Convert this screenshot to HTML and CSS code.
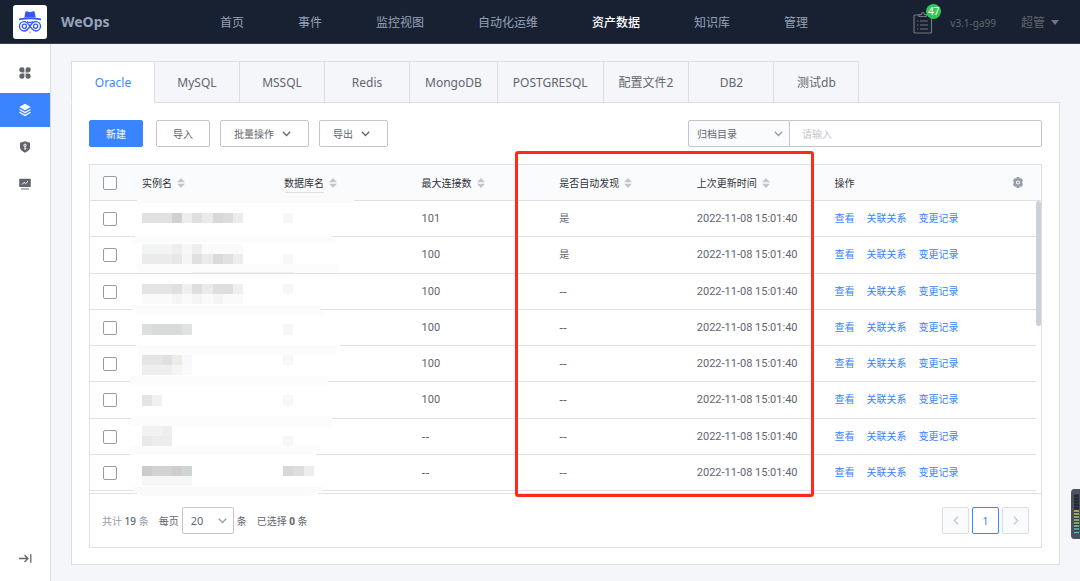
FILE: index.html
```html
<!DOCTYPE html>
<html lang="zh-CN">
<head>
<meta charset="utf-8">
<title>WeOps</title>
<link rel="stylesheet" href="styles.css">
</head>
<body>
<header class="topbar">
  <a class="brand" href="#">
    <span class="logo">
      <svg width="24" height="24" viewBox="0 0 24 24" fill="none">
        <path d="M6.4 7.2 7.3 2.2Q7.6 1 8.8 1.2L12 2.3 15.2 1.2Q16.4 1 16.7 2.2L17.6 7.2Z" fill="#3355f5"/>
        <path d="M6.2 7.6H17.8" stroke="#8fa2fa" stroke-width="1"/>
        <path d="M1 9.4Q12 7.4 23 9.4" stroke="#3355f5" stroke-width="1.6"/>
        <path d="M12 16.200C10 13.500 8.700 11.600 6.200 11.600A4.700 4.700 0 1 0 6.200 21C9.500 21 10.500 18.500 12 16.200C13.500 13.900 14.500 11.600 17.800 11.600A4.700 4.700 0 1 1 17.800 21C15.300 21 14 18.900 12 16.200" stroke="#3355f5" stroke-width="1.400"/>
        <circle cx="6.400" cy="16.300" r="2.100" stroke="#3355f5" stroke-width="1.300"/>
        <circle cx="17.600" cy="16.300" r="2.100" stroke="#3355f5" stroke-width="1.300"/>
        <path d="M9 11.500Q12 13.500 15 11.500" stroke="#3355f5" stroke-width="1.300"/>
        <circle cx="12" cy="22.300" r="1" fill="#f5b04c"/>
      </svg>
    </span>
    <span class="brand-name">WeOps</span>
  </a>
  <nav class="main-nav">
    <a href="#">首页</a>
    <a href="#">事件</a>
    <a href="#">监控视图</a>
    <a href="#">自动化运维</a>
    <a href="#" class="current">资产数据</a>
    <a href="#">知识库</a>
    <a href="#">管理</a>
  </nav>
  <div class="account">
    <button class="tasks" type="button" aria-label="待办">
      <svg width="20" height="22" viewBox="0 0 20 22" fill="none" stroke="#70757f" stroke-width="1.200">
        <path d="M6 3H2Q1 3 1 4V20Q1 21 2 21H17.500Q18.500 21 18.500 20V4Q18.500 3 17.500 3H13.500"/>
        <path d="M6 4.500V2.600H8.200Q8.500 .7 9.800 .7T11.400 2.600H13.500V4.500Z"/>
        <path d="M7 9H15M7 13H15M7 17H15M4 9H5.300M4 13H5.300M4 17H5.300"/>
      </svg>
      <span class="badge">47</span>
    </button>
    <span class="version">v3.1-ga99</span>
    <button class="user" type="button">超管
      <svg width="8" height="5" viewBox="0 0 8 5"><path d="M0 0H8L4 5Z" fill="#70757f"/></svg>
    </button>
  </div>
</header>

<div class="shell">
  <aside class="sidebar">
    <nav class="side-nav">
      <a href="#" aria-label="概览">
        <svg width="12" height="12" viewBox="0 0 12 12" fill="#63656e"><path d="M2.700 .3A2.500 2.500 0 0 1 5.400 3V5.400H3A2.550 2.550 0 1 1 2.700 .3ZM9.300 .3A2.500 2.500 0 0 0 6.600 3V5.400H9A2.550 2.550 0 1 0 9.300 .3ZM2.700 11.700A2.500 2.500 0 0 0 5.400 9V6.600H3A2.550 2.550 0 1 0 2.700 11.700ZM9.300 11.700A2.500 2.500 0 0 1 6.600 9V6.600H9A2.550 2.550 0 1 1 9.300 11.700Z"/></svg>
      </a>
      <a href="#" class="active" aria-label="资产">
        <svg width="12" height="14" viewBox="0 0 12 14" fill="#fff"><path d="M6 .8 11.700 4 6 7.300 .3 4Z"/><path d="M.5 6.500 6 9.600 11.500 6.500M.5 9.300 6 12.400 11.500 9.300" fill="none" stroke="#fff" stroke-width="1.300"/></svg>
      </a>
      <a href="#" aria-label="安全">
        <svg width="12" height="12" viewBox="0 0 12 12"><path d="M6 .3 11 1.800V6.500Q11 9.500 6 11.800Q1 9.500 1 6.500V1.800Z" fill="#63656e"/><circle cx="6" cy="4.300" r="1.200" fill="none" stroke="#fff"/><path d="M6 5.500V9M6 7.500H7.300" stroke="#fff"/></svg>
      </a>
      <a href="#" aria-label="监控">
        <svg width="12" height="12" viewBox="0 0 12 12"><path d="M1 .8H11Q11.800 .8 11.800 1.600V8.200Q11.800 9 11 9H1Q.2 9 .2 8.200V1.600Q.2 .8 1 .8Z" fill="#63656e"/><path d="M3 6.500 5 4.300 6.600 5.700 9 3.300" fill="none" stroke="#fff"/><path d="M2 11H10" stroke="#8b8d95" stroke-width="1.300"/></svg>
      </a>
    </nav>
    <button class="collapse" type="button" aria-label="展开">
      <svg width="13" height="9" viewBox="0 0 13 9" fill="none" stroke="#63656e" stroke-width="1.300"><path d="M0 4.500H8.700M5.500 1 9 4.500 5.500 8M11.800 .3V8.700"/></svg>
    </button>
  </aside>

  <main class="content">
    <div class="tabs">
      <button class="tab selected" type="button">Oracle</button>
      <button class="tab" type="button">MySQL</button>
      <button class="tab" type="button">MSSQL</button>
      <button class="tab" type="button">Redis</button>
      <button class="tab" type="button">MongoDB</button>
      <button class="tab" type="button">POSTGRESQL</button>
      <button class="tab" type="button">配置文件2</button>
      <button class="tab" type="button">DB2</button>
      <button class="tab" type="button">测试db</button>
    </div>
    <section class="card">
      <div class="toolbar">
        <button class="btn primary" type="button">新建</button>
        <button class="btn import" type="button">导入</button>
        <button class="btn" type="button">批量操作
          <svg class="chev" width="9" height="6" viewBox="0 0 9 6"><path d="M.8 .8 4.500 4.500 8.200 .8"/></svg>
        </button>
        <button class="btn" type="button">导出
          <svg class="chev" width="9" height="6" viewBox="0 0 9 6"><path d="M.8 .8 4.500 4.500 8.200 .8"/></svg>
        </button>
        <div class="search">
          <span class="pick field">
            <select aria-label="搜索字段"><option>归档目录</option></select>
            <svg class="chev" width="9" height="6" viewBox="0 0 9 6"><path d="M.8 .8 4.500 4.500 8.200 .8"/></svg>
          </span>
          <input type="text" placeholder="请输入" aria-label="搜索内容">
        </div>
      </div>

      <div class="grid">
        <div class="rows">
          <table>
            <colgroup><col class="c-check"><col class="c-name"><col class="c-mid"><col class="c-mid"><col class="c-mid"><col class="c-mid"><col></colgroup>
            <thead>
              <tr>
                <th><input type="checkbox" aria-label="全选"></th>
                <th>实例名<svg class="sort" viewBox="0 0 8 10"><path d="M4 0 8 4.300H0ZM4 10 0 5.700H8Z"/></svg></th>
                <th>数据库名<svg class="sort" viewBox="0 0 8 10"><path d="M4 0 8 4.300H0ZM4 10 0 5.700H8Z"/></svg></th>
                <th>最大连接数<svg class="sort" viewBox="0 0 8 10"><path d="M4 0 8 4.300H0ZM4 10 0 5.700H8Z"/></svg></th>
                <th>是否自动发现<svg class="sort" viewBox="0 0 8 10"><path d="M4 0 8 4.300H0ZM4 10 0 5.700H8Z"/></svg></th>
                <th>上次更新时间<svg class="sort" viewBox="0 0 8 10"><path d="M4 0 8 4.300H0ZM4 10 0 5.700H8Z"/></svg></th>
                <th><div class="ops-head">操作
                  <button class="gear" type="button" aria-label="列设置"><svg width="10" height="11" viewBox="0 0 10 11"><path fill="#979ba5" fill-rule="evenodd" d="M3.800 0H6.200L6.700 1.600 8.500 1.300 10 3.500 9 5.500 10 7.500 8.500 9.700 6.700 9.400 6.200 11H3.800L3.300 9.400 1.500 9.700 0 7.500 1 5.500 0 3.500 1.500 1.300 3.300 1.600ZM5 3.500A2 2 0 1 0 5 7.500A2 2 0 1 0 5 3.500Z"/><circle cx="5" cy="5.500" r="1.100" fill="#979ba5"/></svg></button>
                </div></th>
              </tr>
            </thead>
            <tbody>
              <tr><td><input type="checkbox" aria-label="选择第1行"></td><td></td><td></td><td>101</td><td class="cjk">是</td><td>2022-11-08 15:01:40</td><td><div class="ops"><a href="#">查看</a><a href="#">关联关系</a><a href="#">变更记录</a></div></td></tr>
              <tr><td><input type="checkbox" aria-label="选择第2行"></td><td></td><td></td><td>100</td><td class="cjk">是</td><td>2022-11-08 15:01:40</td><td><div class="ops"><a href="#">查看</a><a href="#">关联关系</a><a href="#">变更记录</a></div></td></tr>
              <tr><td><input type="checkbox" aria-label="选择第3行"></td><td></td><td></td><td>100</td><td class="none">--</td><td>2022-11-08 15:01:40</td><td><div class="ops"><a href="#">查看</a><a href="#">关联关系</a><a href="#">变更记录</a></div></td></tr>
              <tr><td><input type="checkbox" aria-label="选择第4行"></td><td></td><td></td><td>100</td><td class="none">--</td><td>2022-11-08 15:01:40</td><td><div class="ops"><a href="#">查看</a><a href="#">关联关系</a><a href="#">变更记录</a></div></td></tr>
              <tr><td><input type="checkbox" aria-label="选择第5行"></td><td></td><td></td><td>100</td><td class="none">--</td><td>2022-11-08 15:01:40</td><td><div class="ops"><a href="#">查看</a><a href="#">关联关系</a><a href="#">变更记录</a></div></td></tr>
              <tr><td><input type="checkbox" aria-label="选择第6行"></td><td></td><td></td><td>100</td><td class="none">--</td><td>2022-11-08 15:01:40</td><td><div class="ops"><a href="#">查看</a><a href="#">关联关系</a><a href="#">变更记录</a></div></td></tr>
              <tr><td><input type="checkbox" aria-label="选择第7行"></td><td></td><td></td><td class="none">--</td><td class="none">--</td><td>2022-11-08 15:01:40</td><td><div class="ops"><a href="#">查看</a><a href="#">关联关系</a><a href="#">变更记录</a></div></td></tr>
              <tr><td><input type="checkbox" aria-label="选择第8行"></td><td></td><td></td><td class="none">--</td><td class="none">--</td><td>2022-11-08 15:01:40</td><td><div class="ops"><a href="#">查看</a><a href="#">关联关系</a><a href="#">变更记录</a></div></td></tr>
            </tbody>
          </table>
          <span class="thumb"></span>
        </div>

        <!-- Mosaic hiding the instance and database names -->
        <svg class="mosaic" width="270" height="334" viewBox="89 164 270 334" shape-rendering="crispEdges" aria-hidden="true">
          <path fill="#fafbfd" d="M137 200 285 194H326L354 200V203H137Z"/>
          <path fill="#dcdee3" d="M285 192H324V193H285Z"/>
          <g fill="#fcfcfc">
            <path d="M137 234H330L338 243H131Z"/>
            <path d="M134 264H340L337 273H140Z"/>
            <path d="M130 305H324L319 310 326 314H135Z"/>
            <path d="M136 345H340L337 355H139Z"/>
            <path d="M130 376H329L327 385H130Z"/>
            <path d="M132 416H333L331 426H130Z"/>
            <path d="M130 446H322L316 455H130Z"/>
          </g>
          <path fill="#f9fafa" d="M132 487H324Q322 495 308 496H145Q134 495 132 487Z"/>
          <path fill="#f0f0f2" d="M192 272H294V273H192Z"/>
          <!-- row 1 -->
          <path fill="#e0e1e1" d="M142 213h20v10h-20z"/><path fill="#e1e1df" d="M162 213h10v10h-10z"/><path fill="#d1d1d1" d="M172 213h10v10h-10z"/><path fill="#eceeee" d="M182 213h10v10h-10z"/><path fill="#dedfdf" d="M192 213h10v10h-10z"/><path fill="#ebeae8" d="M202 213h11v10h-11z"/><path fill="#d8d8d8" d="M213 213h10v10h-10z"/><path fill="#dcdcdc" d="M223 213h10v10h-10z"/><path fill="#ebecee" d="M233 213h10v10h-10z"/>
          <!-- row 2 -->
          <path fill="#f3f4f4" d="M142 244h30v10h-30z"/><path fill="#eeeeee" d="M172 244h10v10h-10z"/><path fill="#f6f8f8" d="M182 244h10v10h-10z"/><path fill="#eeeeee" d="M192 244h10v10h-10z"/><path fill="#fafafa" d="M202 244h41v10h-41z"/>
          <path fill="#ebebeb" d="M142 254h30v10h-30z"/><path fill="#e7e7e7" d="M172 254h10v10h-10z"/><path fill="#f4f5f5" d="M182 254h10v10h-10z"/><path fill="#e0e0e0" d="M192 254h10v10h-10z"/><path fill="#ecebe9" d="M202 254h11v10h-11z"/><path fill="#dadada" d="M213 254h10v10h-10z"/><path fill="#e1e1e1" d="M223 254h10v10h-10z"/><path fill="#ecedf0" d="M233 254h10v10h-10z"/>
          <!-- row 3 -->
          <path fill="#e4e4e4" d="M142 284h30v10h-30z"/><path fill="#dfdfdf" d="M172 284h10v10h-10z"/><path fill="#efefef" d="M182 284h10v10h-10z"/><path fill="#dedede" d="M192 284h10v10h-10z"/><path fill="#ecebea" d="M202 284h11v10h-11z"/><path fill="#dedede" d="M213 284h20v10h-20z"/><path fill="#eeeff2" d="M233 284h10v10h-10z"/><path fill="#fafafa" d="M142 294h101v10h-101z"/><path fill="#f5f5f5" d="M172 294h10v10h-10zM192 294h10v10h-10zM213 294h10v10h-10z"/>
          <!-- row 4 -->
          <path fill="#dddede" d="M142 324h10v11h-10z"/><path fill="#d9dbda" d="M152 324h30v11h-30z"/><path fill="#e1e3e2" d="M182 324h10v11h-10z"/>
          <!-- row 5 -->
          <path fill="#e5e5e5" d="M142 355h20v10h-20z"/><path fill="#dfe1e0" d="M162 355h10v10h-10z"/><path fill="#ebebe8" d="M172 355h10v10h-10z"/><path fill="#f6f8fa" d="M182 355h10v10h-10z"/><path fill="#eeeeee" d="M142 365h30v10h-30z"/><path fill="#f4f4f4" d="M172 365h10v10h-10z"/><path fill="#fafafa" d="M182 365h10v10h-10z"/>
          <!-- row 6 -->
          <path fill="#e4e4e3" d="M142 395h10v11h-10z"/><path fill="#f1f1f1" d="M152 395h10v11h-10z"/>
          <!-- row 7 -->
          <path fill="#f2f2f2" d="M142 426h20v10h-20z"/><path fill="#eeeeee" d="M162 426h10v10h-10z"/><path fill="#e8e8e8" d="M142 436h10v10h-10z"/><path fill="#ebeceb" d="M152 436h20v10h-20z"/>
          <!-- row 8 -->
          <path fill="#cdccca" d="M142 466h10v10h-10z"/><path fill="#d2d3d5" d="M152 466h20v10h-20z"/><path fill="#cfcecd" d="M172 466h10v10h-10z"/><path fill="#d0d4d4" d="M182 466h10v10h-10z"/><path fill="#f6f6f6" d="M142 476h50v10h-50z"/>
          <path fill="#d9d8d7" d="M283 466h10v10h-10z"/><path fill="#dcdddf" d="M293 466h11v10h-11z"/><path fill="#ededef" d="M304 466h10v10h-10z"/>
          <path fill="#f7f7f7" d="M283 213h10v10h-10zM283 254h10v10h-10zM283 284h10v10h-10zM283 324h10v11h-10zM283 355h10v10h-10zM283 395h10v11h-10zM283 436h10v10h-10z"/>
        </svg>

        <footer class="pager-bar">
          <span class="muted">共计 <b>19</b> 条</span>
          <label class="per-page">每页
            <span class="pick size">
              <select><option>20</option></select>
              <svg class="chev" width="9" height="6" viewBox="0 0 9 6"><path d="M.8 .8 4.500 4.500 8.200 .8"/></svg>
            </span>
            条</label>
          <span>已选择 <strong>0</strong> 条</span>
          <nav class="pager">
            <button type="button" aria-label="上一页"><svg width="6" height="9" viewBox="0 0 6 9"><path d="M5 .8 1.300 4.500 5 8.200"/></svg></button>
            <button type="button" class="on">1</button>
            <button type="button" aria-label="下一页"><svg width="6" height="9" viewBox="0 0 6 9"><path d="M1 .8 4.700 4.500 1 8.200"/></svg></button>
          </nav>
        </footer>
        <span class="highlight"></span>
      </div>
    </section>
  </main>
</div>

<div class="meter" aria-hidden="true">
  <svg width="9" height="50" viewBox="0 0 9 50"><path d="M9 0H3Q0 0 0 4V46Q0 50 3 50H9Z" fill="#4c5160"/><path d="M3 5H8V45H3Z" fill="#343946"/><g stroke-width="1.500"><path d="M3 7H8M3 10H8M3 13H8M3 16H8M3 19H8" stroke="#22262f"/><path d="M3 22H8M3 25H8" stroke="#d3c94a"/><path d="M3 28H8M3 31H8" stroke="#a9cf62"/><path d="M3 34H8M3 37H8" stroke="#86cf80"/><path d="M3 40H8M3 43.500H8" stroke="#4fc9b0"/></g></svg>
</div>
</body>
</html>
```
FILE: styles.css
```css
* { box-sizing: border-box; }

body {
  margin: 0;
  min-height: 100vh;
  display: flex;
  flex-direction: column;
  background: #f5f6fa;
  color: #63656e;
  font: 10px/16px "Noto Sans", "Noto Sans CJK SC", sans-serif;
}

a { color: inherit; text-decoration: none; }
button, input, select { font: inherit; color: inherit; margin: 0; }
button { padding: 0; border: 0; background: none; cursor: pointer; }
svg { display: block; flex: none; }

/* Top bar */
.topbar {
  display: flex;
  align-items: center;
  height: 44px;
  padding: 0 21px 0 13px;
  background: #182132;
  border-bottom: 1px solid #3a4150;
  font-size: 12px;
}
.brand { display: flex; align-items: center; gap: 14px; width: 207px; }
.logo {
  display: grid;
  place-items: center;
  width: 34px;
  height: 34px;
  background: #fff;
  border-radius: 3px;
}
.brand-name { color: #96a2b9; font-size: 14px; font-weight: 700; }
.main-nav { display: flex; gap: 54px; padding-top: 2px; color: #96a2b9; white-space: nowrap; }
.main-nav .current { color: #fff; font-weight: 500; }
.account { display: flex; align-items: center; margin-left: auto; padding-top: 2px; color: #63656e; }
.tasks { position: relative; margin-right: 17px; }
.badge {
  position: absolute;
  top: -8px;
  right: -8px;
  width: 15px;
  height: 15px;
  border-radius: 50%;
  background: #2dcb56;
  color: #fff;
  font-size: 10px;
  line-height: 15px;
  text-align: center;
}
.version { font-size: 10px; margin-right: 25px; }
.user { display: flex; align-items: center; gap: 6px; }

/* Side bar */
.shell { display: flex; flex: 1; }
.sidebar {
  display: flex;
  flex-direction: column;
  justify-content: space-between;
  width: 51px;
  padding: 12px 0 18px;
  background: #fff;
  border-right: 1px solid #dcdee5;
}
.side-nav { display: flex; flex-direction: column; gap: 3px; }
.side-nav a { display: grid; place-items: center; height: 34px; }
.side-nav .active { background: #3a84ff; }
.collapse { display: grid; place-items: center; height: 12px; }

/* Tabs and card */
.content { flex: 1; min-width: 0; padding: 17px 20px; display: flex; flex-direction: column; }
.tabs { display: flex; position: relative; z-index: 1; }
.tab {
  min-width: 85px;
  height: 42px;
  padding: 2px 15px 0;
  margin-bottom: -1px;
  border: 1px solid #dcdee5;
  border-left: 0;
  background: #f5f6fa;
  font-size: 12px;
  white-space: nowrap;
}
.tab.selected { min-width: 84px; border-left: 1px solid #dcdee5; border-bottom-color: #fff; background: #fff; color: #3a84ff; }
.card { flex: 1; padding: 17px 17px 16px; background: #fff; border: 1px solid #dcdee5; }

/* Tool bar */
.toolbar { display: flex; gap: 10px; margin-bottom: 17px; }
.btn {
  display: flex;
  align-items: center;
  gap: 8px;
  height: 27px;
  padding: 0 17px 0 13px;
  border: 1px solid #c4c6cc;
  border-radius: 2px;
  background: #fff;
  white-space: nowrap;
}
.btn.primary, .btn.import { padding: 0 16px; }
.btn.primary { margin-right: 3px; border-color: #3a84ff; background: #3a84ff; color: #fff; }
.chev { fill: none; stroke: #63656e; stroke-width: 1.3; }
.search { display: flex; width: 354px; margin-left: auto; }
.search input {
  flex: 1;
  min-width: 0;
  padding: 0 12px;
  border: 1px solid #c4c6cc;
  border-left: 0;
  border-radius: 0 2px 2px 0;
  outline: 0;
}
.search input::placeholder { color: #c4c6cc; }
.pick { position: relative; display: block; }
.pick select {
  appearance: none;
  display: block;
  width: 100%;
  height: 27px;
  padding: 0 8px;
  border: 1px solid #c4c6cc;
  border-radius: 2px;
  background: #fff;
}
.pick .chev { position: absolute; right: 7px; top: 11px; stroke: #979ba5; pointer-events: none; }
.pick.field { width: 102px; }
.pick.field select { background: #fafbfd; border-radius: 2px 0 0 2px; }

/* Table */
.grid { position: relative; border: 1px solid #dfe0e5; }
.rows { position: relative; padding: 0 5px 2px 0; background: linear-gradient(#fafbfd 35px, #dfe0e5 35px, #dfe0e5 36px, #fff 36px); }
table { width: 100%; height: 326px; table-layout: fixed; border-collapse: separate; border-spacing: 0; }
.c-check { width: 39px; }
.c-name { width: 15%; }
.c-mid { width: 14.55%; }
th, td { padding: 0 0 0 13px; border-bottom: 1px solid #dfe0e5; text-align: left; white-space: nowrap; }
th { height: 36px; background: #fafbfd; color: #313238; font-weight: 400; }
td { font-family: Roboto, "Noto Sans CJK SC", sans-serif; font-size: 11px; padding-top: 1px; }
td.cjk { font-size: 10px; }
td.none { font-family: "Noto Sans", sans-serif; font-size: 12px; }
input[type="checkbox"] {
  appearance: none;
  display: block;
  width: 14px;
  height: 14px;
  border: 1px solid #979ba5;
  border-radius: 2px;
  background: #fff;
}
.sort { display: inline-block; width: 8px; height: 10px; margin-left: 5px; vertical-align: -1px; fill: #c4c6cc; }
.ops-head { display: flex; align-items: center; justify-content: space-between; padding-right: 13px; }
.ops { display: flex; gap: 12px; color: #3a84ff; font-size: 10px; }
.thumb { position: absolute; top: 36px; right: 0; width: 5px; height: 125px; border-radius: 3px; background: #ccd0d7; }
.mosaic { position: absolute; left: -1px; top: -1px; pointer-events: none; }
.highlight {
  position: absolute;
  left: 425px;
  top: -14px;
  width: 299px;
  height: 346px;
  border: 3px solid #ff2a1c;
  border-radius: 3px;
  pointer-events: none;
}

/* Pagination */
.pager-bar { display: flex; align-items: center; gap: 10px; height: 54px; padding: 0 12px; border-top: 1px solid #dfe0e5; }
.muted { color: #979ba5; }
.muted b { color: #63656e; font-weight: 500; }
.per-page { display: flex; align-items: center; gap: 3px; }
.pick.size { width: 52px; }
.pick.size select { font-size: 11px; }
.pager { display: flex; gap: 3px; margin-left: auto; }
.pager button {
  display: grid;
  place-items: center;
  width: 27px;
  height: 27px;
  border: 1px solid #dcdee5;
  border-radius: 2px;
  background: #fafbfd;
}
.pager svg { fill: none; stroke: #c4c6cc; stroke-width: 1.3; }
.pager .on { border-color: #3a84ff; background: #fff; color: #3a84ff; font-size: 11px; }

/* Floating level meter at the window edge */
.meter { position: fixed; right: 0; top: 489px; }
```
